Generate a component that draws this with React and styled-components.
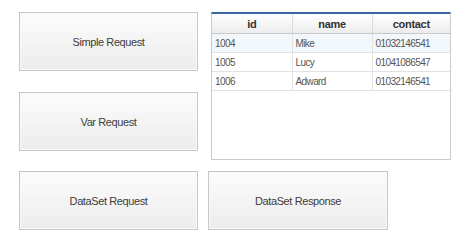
import React from "react";
import styled, { createGlobalStyle } from "styled-components";

const GlobalStyle = createGlobalStyle`
  html, body {
    margin: 0;
    padding: 0;
    background: #ffffff;
  }
  body {
    font-family: "Liberation Sans", "Noto Sans CJK KR", sans-serif;
  }
`;

const Page = styled.div`
  width: 474px;
  height: 244px;
  box-sizing: border-box;
  padding: 12px 0 0 19px;
  display: flex;
  flex-direction: column;
  gap: 11px;
`;

const TopRow = styled.div`
  display: flex;
  align-items: flex-start;
  gap: 13px;
`;

const ButtonColumn = styled.div`
  display: flex;
  flex-direction: column;
  gap: 21px;
`;

const BottomRow = styled.div`
  display: flex;
  gap: 10px;
`;

const Button = styled.button`
  width: ${(p) => p.$w || 179}px;
  height: 59px;
  box-sizing: border-box;
  border: 1px solid #c6c6c6;
  box-shadow: inset 0 0 0 1px #fafafa;
  background: linear-gradient(#fcfcfc, #ececec);
  color: #3c3c3c;
  font-family: inherit;
  font-size: 11px;
  letter-spacing: -0.4px;
  padding: 0;
  cursor: pointer;
`;

const Grid = styled.div`
  width: 240px;
  height: 148px;
  box-sizing: border-box;
  border: 1px solid #c9c9c9;
  border-top: 2px solid #3a67a3;
  background: #ffffff;
`;

const Table = styled.table`
  width: 100%;
  border-collapse: collapse;
  table-layout: fixed;
`;

const Head = styled.th`
  height: 19px;
  padding: 0;
  font-size: 11px;
  letter-spacing: -0.3px;
  font-weight: bold;
  color: #333;
  text-align: center;
  background: linear-gradient(#ffffff, #ececec);
  border-bottom: 1px solid #c9c9c9;
  border-left: 1px solid #dcdcdc;
  &:first-child {
    border-left: none;
  }
`;

const Row = styled.tr`
  background: ${(p) => (p.$active ? "#f2f7fc" : "#ffffff")};
`;

const Cell = styled.td`
  height: 18px;
  padding: 0 0 0 3px;
  font-size: 10px;
  letter-spacing: -0.6px;
  color: #555555;
  text-align: left;
  border-bottom: 1px solid #e2e2e2;
  border-left: 1px solid #e2e2e2;
  &:first-child {
    border-left: none;
  }
`;

const rows = [
  { id: "1004", name: "Mike", contact: "01032146541" },
  { id: "1005", name: "Lucy", contact: "01041086547" },
  { id: "1006", name: "Adward", contact: "01032146541" },
];

export default function App() {
  return (
    <>
      <GlobalStyle />
      <Page>
        <TopRow>
          <ButtonColumn>
            <Button>Simple Request</Button>
            <Button>Var Request</Button>
          </ButtonColumn>
          <Grid>
            <Table>
              <colgroup>
                <col style={{ width: 80 }} />
                <col style={{ width: 80 }} />
                <col />
              </colgroup>
              <thead>
                <tr>
                  <Head>id</Head>
                  <Head>name</Head>
                  <Head>contact</Head>
                </tr>
              </thead>
              <tbody>
                {rows.map((r, i) => (
                  <Row key={r.id} $active={i === 0}>
                    <Cell>{r.id}</Cell>
                    <Cell>{r.name}</Cell>
                    <Cell>{r.contact}</Cell>
                  </Row>
                ))}
              </tbody>
            </Table>
          </Grid>
        </TopRow>
        <BottomRow>
          <Button>DataSet Request</Button>
          <Button $w={180}>DataSet Response</Button>
        </BottomRow>
      </Page>
    </>
  );
}
